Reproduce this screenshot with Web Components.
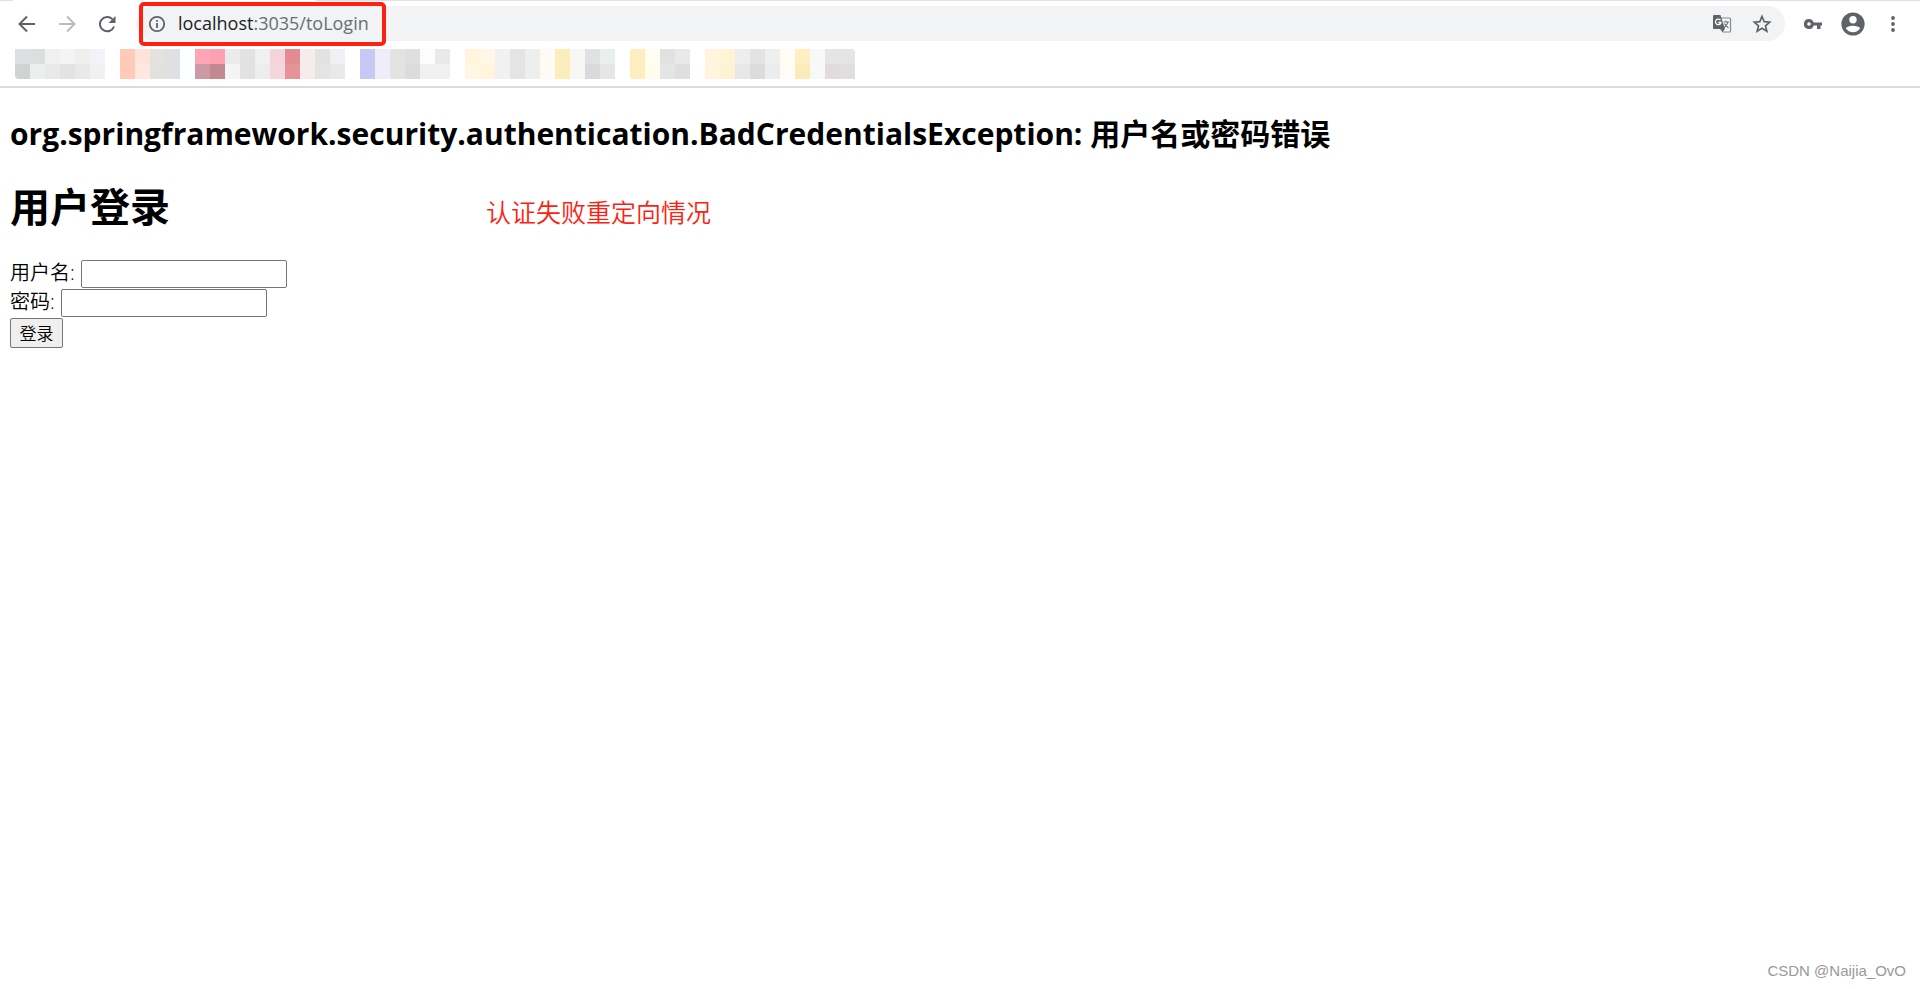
<!DOCTYPE html>
<html lang="zh-CN">
<head>
<meta charset="utf-8">
<title>用户登录</title>
<style>
html, body { margin: 0; background: #fff; }
body { font-family: "Open Sans", "Noto Sans CJK SC", sans-serif; font-size: 20px; color: #000; }
</style>
</head>
<body>
<login-app></login-app>
<script>
const define = (name, html, setup) => customElements.define(name, class extends HTMLElement {
  constructor() {
    super();
    const t = document.createElement('template');
    t.innerHTML = html;
    this.attachShadow({ mode: 'open' }).append(t.content.cloneNode(true));
    if (setup) setup(this.shadowRoot);
  }
});

define('tool-button', `
<style>
:host { display: block; flex: none; }
button { display: grid; place-items: center; width: 40px; height: 35px; padding: 0; border: 0; background: none; color: #5f6368; }
:host([faded]) button { color: #babcbe; }
</style>
<button type="button"><slot></slot></button>`, root => {
  root.querySelector('button').setAttribute('aria-label', root.host.getAttribute('label'));
});

define('address-bar', `
<style>
:host { display: flex; flex: 1; align-items: center; min-width: 0; height: 35px; padding: 0 3px 0 12px; box-sizing: border-box; border-radius: 18px; background: #f1f3f4; position: relative; }
.info { flex: none; }
.url { flex: 1; min-width: 0; margin-left: 12px; padding-bottom: 1px; display: flex; font-size: 18px; line-height: 24px; color: #6a6e72; white-space: pre; }
b { font-weight: 400; color: #202124; }
.mark { position: absolute; left: 3px; top: -4px; width: 247px; height: 44px; box-sizing: border-box; border: 4px solid #ff2010; border-radius: 5px; }
</style>
<svg class="info" width="18" height="18" viewBox="0 0 18 18" fill="none" stroke="#5f6368"><circle cx="9" cy="9" r="7.2" stroke-width="1.8"/><path d="M9 8v5M9 5v1.8" stroke-width="1.8"/></svg>
<div class="url"><b>localhost</b><span>:3035/toLogin</span></div>
<slot></slot>
<div class="mark"></div>`);

define('blurred-bookmarks', `
<style>
:host { display: block; padding: 0 15px; }
.strip { display: grid; grid-template-columns: repeat(56, 15px); grid-auto-rows: 15px; width: max-content; border-radius: 0 3px 0 4px; overflow: hidden; }
</style>
<div class="strip"></div>`, root => {
  const top = 'dddfe2 dcdee0 f0f0f0 f4f4f4 f1efed f1f3f6 ffffff ffcbb8 ffe2d9 e4e2df dfe0e4 fcfeff ffa5b4 ffa0b0 ebebeb e2e2e2 f0f0f0 f4d4d9 e38b92 f6ecec e2e2e2 eef0f3 ffffff c7c8f6 eeeefb e3e3e1 dfdfdf fcfcfc e9e9e9 fefffe fff5df fff8e6 f1f1f1 e4e4e4 eeeeee fffbf4 fcedbd f9f7f5 dfe1e3 eaeeed ffffff fdeec2 fffcf1 e1e1e1 e9e9e9 ffffff fff5de fff3d6 ededed e3e3e3 eeefef fffcf6 fdeec4 f9f8f8 e4e6e5 e4e5e4';
  const low = 'd1d2d4 ebeeed e9e9e9 e3e3e3 e9e9e9 f0f2f1 ffffff ffcbb8 ffe8e0 e3e1de dfe0e4 fcfeff cc99a5 c48893 f4f4f4 e2e2e2 ebeeed f5d6db e69299 f6ecec e4e4e4 e7e9eb ffffff c7c8f6 eeeefb e3e3e1 dbdbdb f0f0f0 f0f0f0 fefffe fff7e2 fff5dc f1f1f1 e4e4e4 eeeeee fffbf4 fcedbd f9f7f5 dadadd e6e6e7 ffffff fdeec2 fffbed e5e5e6 dfdfdf fefeff fff5de fdf2d2 e8e8ea dedcda ebecee fffbf5 fcebba f9f8f8 dfdcdb dfdee1';
  const strip = root.querySelector('.strip');
  for (const c of (top + ' ' + low).split(' ')) {
    const cell = document.createElement('span');
    cell.style.background = '#' + c;
    strip.append(cell);
  }
});

define('browser-chrome', `
<style>
:host { display: block; border-bottom: 2px solid #dadbe0; }
.edge { display: flex; height: 1px; background: #dee1e6; }
.edge i { width: 303px; margin-left: 13px; background: #fff; }
nav { display: flex; align-items: center; padding: 5px 7px 0 7px; }
address-bar { margin: 0 8px 0 9px; }
blurred-bookmarks { padding-top: 8px; padding-bottom: 7px; }
</style>
<div class="edge"><i></i></div>
<nav>
  <tool-button label="Back"><svg width="18" height="18" viewBox="0 0 18 18" fill="none" stroke="currentColor" stroke-width="2"><path d="M17 9H2M9 1.5 1.5 9 9 16.500"/></svg></tool-button>
  <tool-button label="Forward" faded><svg width="18" height="18" viewBox="0 0 18 18" fill="none" stroke="currentColor" stroke-width="2"><path d="M1 9h15M9 1.500 16.500 9 9 16.500"/></svg></tool-button>
  <tool-button label="Reload"><svg width="18" height="18" viewBox="0 0 18 18"><path d="M14.300 4A7.200 7.200 0 1 0 16 11.500" fill="none" stroke="currentColor" stroke-width="2"/><path d="M17.500 1v7h-7z" fill="currentColor"/></svg></tool-button>
  <address-bar>
    <tool-button label="Translate"><svg width="20" height="20" viewBox="0 0 20 20"><path d="M8 4h9.500q1 0 1 1v12q0 1-1 1H11L8.500 15" fill="#f8f9fa" stroke="#85888c" stroke-width="1.200"/><path d="M2 1h6.500l4.500 14H2q-1 0-1-1V2q0-1 1-1z" fill="#5f6368"/><path d="M9 15h4l-2.500 3z" fill="#5f6368"/><path d="M8.500 6.200A2.800 2.800 0 1 0 9 8.500H6.300" fill="none" stroke="#fff" stroke-width="1.300"/><path d="M11.500 8h5.500M14 6.500V8M16 8q-.8 3-4 5.500M12.500 9.500q1 2.500 4 4.500" fill="none" stroke="#74777b" stroke-width="1.100"/></svg></tool-button>
    <tool-button label="Bookmark"><svg width="20" height="20" viewBox="0 0 20 20" fill="none" stroke="currentColor" stroke-width="1.700"><path d="M10 2.500 12.200 7.600 17.700 8.100 13.500 11.800 14.800 17.200 10 14.300 5.200 17.200 6.500 11.800 2.300 8.100 7.800 7.600z"/></svg></tool-button>
  </address-bar>
  <tool-button label="Passwords"><svg width="18" height="12" viewBox="0 0 18 12" fill="currentColor"><path d="M5 1a5 5 0 1 0 4.700 6.500H13V11h3.500V7.500H18v-3H9.700A5 5 0 0 0 5 1zm0 3.200a1.800 1.800 0 1 1 0 3.600 1.800 1.800 0 0 1 0-3.600z"/></svg></tool-button>
  <tool-button label="Profile"><svg width="24" height="24" viewBox="0 0 24 24"><circle cx="12" cy="12" r="11.600" fill="#5f6368"/><circle cx="12" cy="7.800" r="3.700" fill="#fff"/><path d="M4.800 16.300C6.500 12.800 17.500 12.800 19.200 16.300 16 21.500 8 21.500 4.800 16.300z" fill="#fff"/></svg></tool-button>
  <tool-button label="Menu"><svg width="18" height="18" viewBox="0 0 18 18" fill="currentColor"><circle cx="9" cy="3" r="1.900"/><circle cx="9" cy="9" r="1.900"/><circle cx="9" cy="15" r="1.900"/></svg></tool-button>
</nav>
<blurred-bookmarks></blurred-bookmarks>`);

define('login-form', `
<style>
:host { display: block; }
form { margin: 0; }
.row { display: flex; align-items: flex-start; gap: 6px; height: 29px; }
label { line-height: 26px; white-space: pre; font-weight: 350; }
input { width: 206px; height: 28px; box-sizing: border-box; margin: 0; padding: 1px 3px; border: 1px solid #767676; border-radius: 2px; background: #fff; font: inherit; font-size: 17px; }
button { display: block; width: 53px; height: 30px; margin: 0; padding: 1px 0 0; border: 1px solid #767676; border-radius: 2px; background: #efefef; color: #000; font: inherit; font-weight: 350; font-size: 17px; line-height: 27px; }
</style>
<form onsubmit="return false">
  <div class="row"><label for="u">用户名:</label><input id="u" type="text"></div>
  <div class="row"><label for="p">密码:</label><input id="p" type="password"></div>
  <button>登录</button>
</form>`);

define('login-app', `
<style>
:host { display: block; position: relative; min-height: 100vh; }
main { padding: 26px 10px 0; }
h2 { margin: 0 0 26px; font-size: 30px; line-height: 40px; font-weight: 700; }
.title { display: flex; align-items: center; margin-bottom: 27px; }
h1 { margin: 0; width: 476px; font-size: 40px; line-height: 53px; font-weight: 700; }
.note { margin: 0; padding-top: 10px; font-size: 25px; line-height: 40px; color: #ff2010; font-weight: 350; }
.credit { position: absolute; right: 14px; bottom: 7px; font: 15px/22px "Liberation Sans", sans-serif; color: #999; }
</style>
<browser-chrome></browser-chrome>
<main>
  <h2>org.springframework.security.authentication.BadCredentialsException: 用户名或密码错误</h2>
  <div class="title"><h1>用户登录</h1><p class="note">认证失败重定向情况</p></div>
  <login-form></login-form>
</main>
<div class="credit">CSDN @Naijia_OvO</div>`);
</script>
</body>
</html>
